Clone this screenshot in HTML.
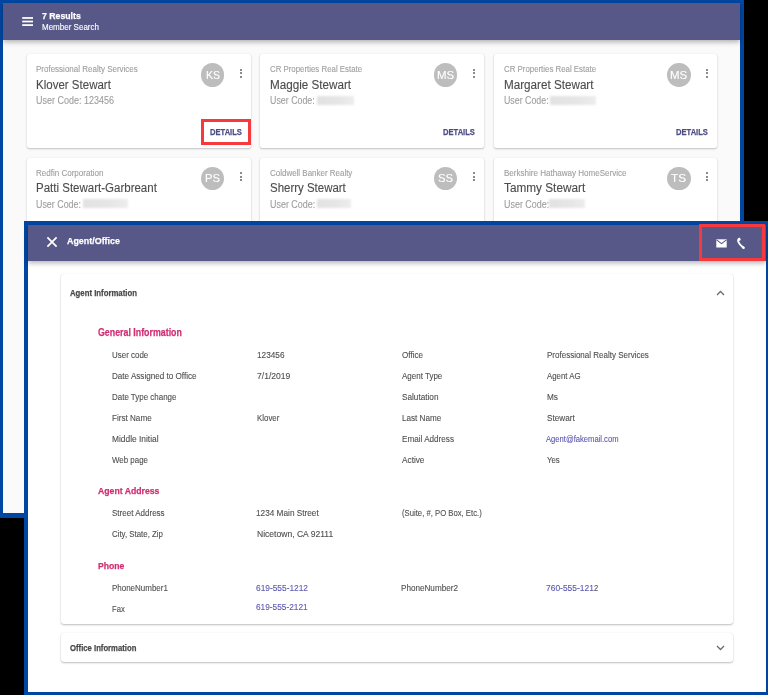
<!DOCTYPE html>
<html><head><meta charset="utf-8"><style>
html,body{margin:0;padding:0;background:#000;width:768px;height:695px;overflow:hidden}
body{position:relative;font-family:"Liberation Sans",sans-serif}
.b{position:absolute;box-sizing:border-box}
.t{position:absolute;white-space:nowrap;transform-origin:0 0}
</style></head><body>
<div class="b" style="left:0px;top:0px;width:744px;height:518px;background:#0047a3"></div>
<div class="b" style="left:3px;top:3px;width:736.5px;height:510.29999999999995px;background:#fafafa"></div>
<div class="b" style="left:3px;top:3px;width:736.5px;height:37.3px;background:#585888;box-shadow:0 2px 5px rgba(0,0,0,.3)"></div>
<svg class="b" style="left:20px;top:15px" width="16" height="14" viewBox="0 0 16 14"><rect x="2.2" y="2.1" width="10.8" height="1.75" fill="#fff"/><rect x="2.2" y="5.65" width="10.8" height="1.75" fill="#fff"/><rect x="2.2" y="9.2" width="10.8" height="1.75" fill="#fff"/></svg>
<div class="t" style="left:42.30px;top:10.74px;font-size:9.637px;line-height:9.637px;font-weight:700;color:#fff;transform:scaleX(0.9058);;-webkit-text-stroke:0.25px #fff">7 Results</div>
<div class="t" style="left:42.20px;top:23.49px;font-size:8.520px;line-height:8.520px;font-weight:400;color:#fff;transform:scaleX(0.9403);;-webkit-text-stroke:0.12px #fff">Member Search</div>
<div class="b" style="left:26.7px;top:54px;width:224.3px;height:94px;background:#fff;border-radius:2px;box-shadow:0 1px 2px rgba(0,0,0,.22),0 0 1px rgba(0,0,0,.12)"></div>
<div class="t" style="left:36.30px;top:65.22px;font-size:9.078px;line-height:9.078px;font-weight:400;color:#9e9e9e;transform:scaleX(0.8826);;-webkit-text-stroke:0.12px #9e9e9e">Professional Realty Services</div>
<div class="t" style="left:36.30px;top:79.60px;font-size:11.872px;line-height:11.872px;font-weight:400;color:#4c4c4c;transform:scaleX(0.9712);;-webkit-text-stroke:0.12px #4c4c4c">Klover Stewart</div>
<div class="t" style="left:36.30px;top:96.15px;font-size:10.335px;line-height:10.335px;font-weight:400;color:#9e9e9e;transform:scaleX(0.8700);;-webkit-text-stroke:0.12px #9e9e9e">User Code: 123456</div>
<div class="b" style="left:200.7px;top:63.1px;width:23.80000000000001px;height:23.800000000000004px;background:#bdbdbd;border-radius:50%"></div>
<div class="t" style="left:205.55px;top:69.92px;font-size:11.313px;line-height:11.313px;font-weight:400;color:#fff;transform:scaleX(0.9336);;-webkit-text-stroke:0.2px #fff;-webkit-text-stroke:0.12px #fff">KS</div>
<div class="b" style="left:239.95000000000002px;top:68.64999999999999px;width:1.8999999999999773px;height:1.9000000000000057px;background:#666;border-radius:50%"></div>
<div class="b" style="left:239.95000000000002px;top:72.14999999999999px;width:1.8999999999999773px;height:1.9000000000000057px;background:#666;border-radius:50%"></div>
<div class="b" style="left:239.95000000000002px;top:75.64999999999999px;width:1.8999999999999773px;height:1.9000000000000057px;background:#666;border-radius:50%"></div>
<div class="t" style="left:209.80px;top:128.02px;font-size:9.078px;line-height:9.078px;font-weight:700;color:#4d4d86;transform:scaleX(0.8383);;-webkit-text-stroke:0.25px #4d4d86">DETAILS</div>
<div class="b" style="left:260px;top:54px;width:224px;height:94px;background:#fff;border-radius:2px;box-shadow:0 1px 2px rgba(0,0,0,.22),0 0 1px rgba(0,0,0,.12)"></div>
<div class="t" style="left:269.60px;top:65.22px;font-size:9.078px;line-height:9.078px;font-weight:400;color:#9e9e9e;transform:scaleX(0.8662);;-webkit-text-stroke:0.12px #9e9e9e">CR Properties Real Estate</div>
<div class="t" style="left:269.60px;top:79.60px;font-size:11.872px;line-height:11.872px;font-weight:400;color:#4c4c4c;transform:scaleX(0.9842);;-webkit-text-stroke:0.12px #4c4c4c">Maggie Stewart</div>
<div class="t" style="left:269.60px;top:96.15px;font-size:10.335px;line-height:10.335px;font-weight:400;color:#9e9e9e;transform:scaleX(0.8567);;-webkit-text-stroke:0.12px #9e9e9e">User Code:</div>
<div class="b" style="left:317.3px;top:95.8px;width:37.0px;height:9.0px;background:linear-gradient(90deg,#e2e2e2,#e6e6e6 60%,#ededed);filter:blur(1px)"></div>
<div class="b" style="left:433.70000000000005px;top:63.1px;width:23.799999999999955px;height:23.800000000000004px;background:#bdbdbd;border-radius:50%"></div>
<div class="t" style="left:436.95px;top:69.92px;font-size:11.313px;line-height:11.313px;font-weight:400;color:#fff;transform:scaleX(1.0195);;-webkit-text-stroke:0.2px #fff;-webkit-text-stroke:0.12px #fff">MS</div>
<div class="b" style="left:472.95px;top:68.64999999999999px;width:1.8999999999999773px;height:1.9000000000000057px;background:#666;border-radius:50%"></div>
<div class="b" style="left:472.95px;top:72.14999999999999px;width:1.8999999999999773px;height:1.9000000000000057px;background:#666;border-radius:50%"></div>
<div class="b" style="left:472.95px;top:75.64999999999999px;width:1.8999999999999773px;height:1.9000000000000057px;background:#666;border-radius:50%"></div>
<div class="t" style="left:442.80px;top:128.02px;font-size:9.078px;line-height:9.078px;font-weight:700;color:#4d4d86;transform:scaleX(0.8383);;-webkit-text-stroke:0.25px #4d4d86">DETAILS</div>
<div class="b" style="left:494px;top:54px;width:223.29999999999995px;height:94px;background:#fff;border-radius:2px;box-shadow:0 1px 2px rgba(0,0,0,.22),0 0 1px rgba(0,0,0,.12)"></div>
<div class="t" style="left:503.60px;top:65.22px;font-size:9.078px;line-height:9.078px;font-weight:400;color:#9e9e9e;transform:scaleX(0.8671);;-webkit-text-stroke:0.12px #9e9e9e">CR Properties Real Estate</div>
<div class="t" style="left:503.60px;top:79.60px;font-size:11.872px;line-height:11.872px;font-weight:400;color:#4c4c4c;transform:scaleX(0.9840);;-webkit-text-stroke:0.12px #4c4c4c">Margaret Stewart</div>
<div class="t" style="left:503.60px;top:96.15px;font-size:10.335px;line-height:10.335px;font-weight:400;color:#9e9e9e;transform:scaleX(0.8547);;-webkit-text-stroke:0.12px #9e9e9e">User Code:</div>
<div class="b" style="left:550.2px;top:95.8px;width:45.799999999999955px;height:9.0px;background:linear-gradient(90deg,#e2e2e2,#e6e6e6 60%,#ededed);filter:blur(1px)"></div>
<div class="b" style="left:667.0px;top:63.1px;width:23.799999999999955px;height:23.800000000000004px;background:#bdbdbd;border-radius:50%"></div>
<div class="t" style="left:670.25px;top:69.92px;font-size:11.313px;line-height:11.313px;font-weight:400;color:#fff;transform:scaleX(1.0195);;-webkit-text-stroke:0.2px #fff;-webkit-text-stroke:0.12px #fff">MS</div>
<div class="b" style="left:706.2499999999999px;top:68.64999999999999px;width:1.900000000000091px;height:1.9000000000000057px;background:#666;border-radius:50%"></div>
<div class="b" style="left:706.2499999999999px;top:72.14999999999999px;width:1.900000000000091px;height:1.9000000000000057px;background:#666;border-radius:50%"></div>
<div class="b" style="left:706.2499999999999px;top:75.64999999999999px;width:1.900000000000091px;height:1.9000000000000057px;background:#666;border-radius:50%"></div>
<div class="t" style="left:676.10px;top:128.02px;font-size:9.078px;line-height:9.078px;font-weight:700;color:#4d4d86;transform:scaleX(0.8383);;-webkit-text-stroke:0.25px #4d4d86">DETAILS</div>
<div class="b" style="left:26.7px;top:157.5px;width:224.3px;height:102.5px;background:#fff;border-radius:2px;box-shadow:0 1px 2px rgba(0,0,0,.22),0 0 1px rgba(0,0,0,.12)"></div>
<div class="t" style="left:36.30px;top:168.72px;font-size:9.078px;line-height:9.078px;font-weight:400;color:#9e9e9e;transform:scaleX(0.8857);;-webkit-text-stroke:0.12px #9e9e9e">Redfin Corporation</div>
<div class="t" style="left:36.30px;top:183.10px;font-size:11.872px;line-height:11.872px;font-weight:400;color:#4c4c4c;transform:scaleX(0.9702);;-webkit-text-stroke:0.12px #4c4c4c">Patti Stewart-Garbreant</div>
<div class="t" style="left:36.30px;top:199.65px;font-size:10.335px;line-height:10.335px;font-weight:400;color:#9e9e9e;transform:scaleX(0.8605);;-webkit-text-stroke:0.12px #9e9e9e">User Code:</div>
<div class="b" style="left:82.5px;top:199.3px;width:45.900000000000006px;height:9.0px;background:linear-gradient(90deg,#e2e2e2,#e6e6e6 60%,#ededed);filter:blur(1px)"></div>
<div class="b" style="left:200.7px;top:166.6px;width:23.80000000000001px;height:23.80000000000001px;background:#bdbdbd;border-radius:50%"></div>
<div class="t" style="left:205.05px;top:173.42px;font-size:11.313px;line-height:11.313px;font-weight:400;color:#fff;transform:scaleX(0.9998);;-webkit-text-stroke:0.2px #fff;-webkit-text-stroke:0.12px #fff">PS</div>
<div class="b" style="left:239.95000000000002px;top:172.14999999999998px;width:1.8999999999999773px;height:1.900000000000034px;background:#666;border-radius:50%"></div>
<div class="b" style="left:239.95000000000002px;top:175.64999999999998px;width:1.8999999999999773px;height:1.900000000000034px;background:#666;border-radius:50%"></div>
<div class="b" style="left:239.95000000000002px;top:179.14999999999998px;width:1.8999999999999773px;height:1.900000000000034px;background:#666;border-radius:50%"></div>
<div class="b" style="left:260px;top:157.5px;width:224px;height:102.5px;background:#fff;border-radius:2px;box-shadow:0 1px 2px rgba(0,0,0,.22),0 0 1px rgba(0,0,0,.12)"></div>
<div class="t" style="left:269.60px;top:168.72px;font-size:9.078px;line-height:9.078px;font-weight:400;color:#9e9e9e;transform:scaleX(0.8789);;-webkit-text-stroke:0.12px #9e9e9e">Coldwell Banker Realty</div>
<div class="t" style="left:269.60px;top:183.10px;font-size:11.872px;line-height:11.872px;font-weight:400;color:#4c4c4c;transform:scaleX(0.9665);;-webkit-text-stroke:0.12px #4c4c4c">Sherry Stewart</div>
<div class="t" style="left:269.60px;top:199.65px;font-size:10.335px;line-height:10.335px;font-weight:400;color:#9e9e9e;transform:scaleX(0.8662);;-webkit-text-stroke:0.12px #9e9e9e">User Code:</div>
<div class="b" style="left:316.6px;top:199.3px;width:34.0px;height:9.0px;background:linear-gradient(90deg,#e2e2e2,#e6e6e6 60%,#ededed);filter:blur(1px)"></div>
<div class="b" style="left:433.70000000000005px;top:166.6px;width:23.799999999999955px;height:23.80000000000001px;background:#bdbdbd;border-radius:50%"></div>
<div class="t" style="left:438.05px;top:173.42px;font-size:11.313px;line-height:11.313px;font-weight:400;color:#fff;transform:scaleX(0.9998);;-webkit-text-stroke:0.2px #fff;-webkit-text-stroke:0.12px #fff">SS</div>
<div class="b" style="left:472.95px;top:172.14999999999998px;width:1.8999999999999773px;height:1.900000000000034px;background:#666;border-radius:50%"></div>
<div class="b" style="left:472.95px;top:175.64999999999998px;width:1.8999999999999773px;height:1.900000000000034px;background:#666;border-radius:50%"></div>
<div class="b" style="left:472.95px;top:179.14999999999998px;width:1.8999999999999773px;height:1.900000000000034px;background:#666;border-radius:50%"></div>
<div class="b" style="left:494px;top:157.5px;width:223.29999999999995px;height:102.5px;background:#fff;border-radius:2px;box-shadow:0 1px 2px rgba(0,0,0,.22),0 0 1px rgba(0,0,0,.12)"></div>
<div class="t" style="left:503.60px;top:168.72px;font-size:9.078px;line-height:9.078px;font-weight:400;color:#9e9e9e;transform:scaleX(0.8882);;-webkit-text-stroke:0.12px #9e9e9e">Berkshire Hathaway HomeService</div>
<div class="t" style="left:503.60px;top:183.10px;font-size:11.872px;line-height:11.872px;font-weight:400;color:#4c4c4c;transform:scaleX(0.9940);;-webkit-text-stroke:0.12px #4c4c4c">Tammy Stewart</div>
<div class="t" style="left:503.60px;top:199.65px;font-size:10.335px;line-height:10.335px;font-weight:400;color:#9e9e9e;transform:scaleX(0.8662);;-webkit-text-stroke:0.12px #9e9e9e">User Code:</div>
<div class="b" style="left:549.4px;top:199.3px;width:35.89999999999998px;height:9.0px;background:linear-gradient(90deg,#e2e2e2,#e6e6e6 60%,#ededed);filter:blur(1px)"></div>
<div class="b" style="left:667.0px;top:166.6px;width:23.799999999999955px;height:23.80000000000001px;background:#bdbdbd;border-radius:50%"></div>
<div class="t" style="left:671.35px;top:173.42px;font-size:11.313px;line-height:11.313px;font-weight:400;color:#fff;transform:scaleX(1.0428);;-webkit-text-stroke:0.2px #fff;-webkit-text-stroke:0.12px #fff">TS</div>
<div class="b" style="left:706.2499999999999px;top:172.14999999999998px;width:1.900000000000091px;height:1.900000000000034px;background:#666;border-radius:50%"></div>
<div class="b" style="left:706.2499999999999px;top:175.64999999999998px;width:1.900000000000091px;height:1.900000000000034px;background:#666;border-radius:50%"></div>
<div class="b" style="left:706.2499999999999px;top:179.14999999999998px;width:1.900000000000091px;height:1.900000000000034px;background:#666;border-radius:50%"></div>
<div class="b" style="left:201.2px;top:119.4px;width:49.5px;height:25.599999999999994px;border:3px solid #f5393c;box-sizing:border-box"></div>
<div class="b" style="left:24px;top:221px;width:744px;height:474px;background:#0047a3"></div>
<div class="b" style="left:28px;top:224.5px;width:737.6px;height:467.70000000000005px;background:#fff"></div>
<div class="b" style="left:28px;top:224.5px;width:737.6px;height:36.0px;background:#585888;box-shadow:0 2px 5px rgba(0,0,0,.3)"></div>
<svg class="b" style="left:46px;top:236px" width="12" height="12" viewBox="0 0 12 12"><path d="M1.4 1.4L10.6 10.6M10.6 1.4L1.4 10.6" stroke="#fff" stroke-width="1.75"/></svg>
<div class="t" style="left:66.60px;top:235.97px;font-size:9.777px;line-height:9.777px;font-weight:700;color:#fff;transform:scaleX(0.9119);;-webkit-text-stroke:0.25px #fff">Agent/Office</div>
<svg class="b" style="left:715.5px;top:238.5px" width="12" height="9" viewBox="0 0 12 9"><rect x="0.3" y="0.3" width="10.4" height="8.2" fill="#fff"/><path d="M0.6 0.9L5.5 4.6L10.4 0.9" stroke="#585888" stroke-width="1.1" fill="none"/></svg>
<svg class="b" style="left:736px;top:237px" width="10" height="13" viewBox="0 0 10 13"><path d="M3.2 1.8C1.2 2.8 1.6 6.4 7.6 10.9" stroke="#fff" stroke-width="1.9" stroke-linecap="round" fill="none"/><ellipse cx="3.3" cy="2.3" rx="1.3" ry="1.5" fill="#fff" transform="rotate(-30 3.3 2.3)"/><ellipse cx="7.3" cy="10.4" rx="1.6" ry="1.2" fill="#fff" transform="rotate(35 7.3 10.4)"/></svg>
<div class="b" style="left:699.3px;top:223.6px;width:65.30000000000007px;height:37.50000000000003px;border:3px solid #f5393c;box-sizing:border-box"></div>
<div class="b" style="left:60.7px;top:273.8px;width:672.6999999999999px;height:350.2px;background:#fff;border-radius:3px;box-shadow:0 1px 2px rgba(0,0,0,.25),0 0 1px rgba(0,0,0,.1)"></div>
<div class="t" style="left:70.10px;top:289.25px;font-size:8.799px;line-height:8.799px;font-weight:700;color:#4a4a4a;transform:scaleX(0.8844);;-webkit-text-stroke:0.25px #4a4a4a">Agent Information</div>
<svg class="b" style="left:716px;top:290px" width="9" height="6" viewBox="0 0 9 6"><path d="M1 5L4.5 1.5L8 5" stroke="#6a6a6a" stroke-width="1.25" fill="none"/></svg>
<div class="t" style="left:97.90px;top:327.03px;font-size:10.894px;line-height:10.894px;font-weight:700;color:#cf2f73;transform:scaleX(0.8117);;-webkit-text-stroke:0.25px #cf2f73">General Information</div>
<div class="t" style="left:112.10px;top:350.27px;font-size:9.777px;line-height:9.777px;font-weight:400;color:#4f4f4f;transform:scaleX(0.8142);;-webkit-text-stroke:0.12px #4f4f4f">User code</div>
<div class="t" style="left:257.30px;top:350.27px;font-size:9.777px;line-height:9.777px;font-weight:400;color:#4f4f4f;transform:scaleX(0.8434);;-webkit-text-stroke:0.12px #4f4f4f">123456</div>
<div class="t" style="left:401.50px;top:350.27px;font-size:9.777px;line-height:9.777px;font-weight:400;color:#4f4f4f;transform:scaleX(0.8277);;-webkit-text-stroke:0.12px #4f4f4f">Office</div>
<div class="t" style="left:546.50px;top:350.27px;font-size:9.777px;line-height:9.777px;font-weight:400;color:#4f4f4f;transform:scaleX(0.8196);;-webkit-text-stroke:0.12px #4f4f4f">Professional Realty Services</div>
<div class="t" style="left:112.10px;top:371.22px;font-size:9.777px;line-height:9.777px;font-weight:400;color:#4f4f4f;transform:scaleX(0.8297);;-webkit-text-stroke:0.12px #4f4f4f">Date Assigned to Office</div>
<div class="t" style="left:257.30px;top:371.22px;font-size:9.777px;line-height:9.777px;font-weight:400;color:#4f4f4f;transform:scaleX(0.8771);;-webkit-text-stroke:0.12px #4f4f4f">7/1/2019</div>
<div class="t" style="left:401.50px;top:371.22px;font-size:9.777px;line-height:9.777px;font-weight:400;color:#4f4f4f;transform:scaleX(0.8179);;-webkit-text-stroke:0.12px #4f4f4f">Agent Type</div>
<div class="t" style="left:546.50px;top:371.22px;font-size:9.777px;line-height:9.777px;font-weight:400;color:#4f4f4f;transform:scaleX(0.8054);;-webkit-text-stroke:0.12px #4f4f4f">Agent AG</div>
<div class="t" style="left:112.10px;top:392.17px;font-size:9.777px;line-height:9.777px;font-weight:400;color:#4f4f4f;transform:scaleX(0.8145);;-webkit-text-stroke:0.12px #4f4f4f">Date Type change</div>
<div class="t" style="left:401.50px;top:392.17px;font-size:9.777px;line-height:9.777px;font-weight:400;color:#4f4f4f;transform:scaleX(0.8390);;-webkit-text-stroke:0.12px #4f4f4f">Salutation</div>
<div class="t" style="left:546.50px;top:392.17px;font-size:9.777px;line-height:9.777px;font-weight:400;color:#4f4f4f;transform:scaleX(0.8428);;-webkit-text-stroke:0.12px #4f4f4f">Ms</div>
<div class="t" style="left:112.10px;top:413.12px;font-size:9.777px;line-height:9.777px;font-weight:400;color:#4f4f4f;transform:scaleX(0.8304);;-webkit-text-stroke:0.12px #4f4f4f">First Name</div>
<div class="t" style="left:257.30px;top:413.12px;font-size:9.777px;line-height:9.777px;font-weight:400;color:#4f4f4f;transform:scaleX(0.8082);;-webkit-text-stroke:0.12px #4f4f4f">Klover</div>
<div class="t" style="left:401.50px;top:413.12px;font-size:9.777px;line-height:9.777px;font-weight:400;color:#4f4f4f;transform:scaleX(0.8314);;-webkit-text-stroke:0.12px #4f4f4f">Last Name</div>
<div class="t" style="left:546.50px;top:413.12px;font-size:9.777px;line-height:9.777px;font-weight:400;color:#4f4f4f;transform:scaleX(0.8358);;-webkit-text-stroke:0.12px #4f4f4f">Stewart</div>
<div class="t" style="left:112.10px;top:434.07px;font-size:9.777px;line-height:9.777px;font-weight:400;color:#4f4f4f;transform:scaleX(0.8573);;-webkit-text-stroke:0.12px #4f4f4f">Middle Initial</div>
<div class="t" style="left:401.50px;top:434.07px;font-size:9.777px;line-height:9.777px;font-weight:400;color:#4f4f4f;transform:scaleX(0.8324);;-webkit-text-stroke:0.12px #4f4f4f">Email Address</div>
<div class="t" style="left:545.60px;top:434.07px;font-size:9.777px;line-height:9.777px;font-weight:400;color:#5d58b0;transform:scaleX(0.7800);;-webkit-text-stroke:0.12px #5d58b0">Agent@fakemail.com</div>
<div class="t" style="left:112.10px;top:455.02px;font-size:9.777px;line-height:9.777px;font-weight:400;color:#4f4f4f;transform:scaleX(0.8111);;-webkit-text-stroke:0.12px #4f4f4f">Web page</div>
<div class="t" style="left:401.50px;top:455.02px;font-size:9.777px;line-height:9.777px;font-weight:400;color:#4f4f4f;transform:scaleX(0.8446);;-webkit-text-stroke:0.12px #4f4f4f">Active</div>
<div class="t" style="left:546.50px;top:455.02px;font-size:9.777px;line-height:9.777px;font-weight:400;color:#4f4f4f;transform:scaleX(0.8032);;-webkit-text-stroke:0.12px #4f4f4f">Yes</div>
<div class="t" style="left:98.30px;top:486.41px;font-size:9.497px;line-height:9.497px;font-weight:700;color:#cf2f73;transform:scaleX(0.9153);;-webkit-text-stroke:0.25px #cf2f73">Agent Address</div>
<div class="t" style="left:112.30px;top:507.99px;font-size:9.637px;line-height:9.637px;font-weight:400;color:#4f4f4f;transform:scaleX(0.8336);;-webkit-text-stroke:0.12px #4f4f4f">Street Address</div>
<div class="t" style="left:256.25px;top:508.09px;font-size:9.637px;line-height:9.637px;font-weight:400;color:#4f4f4f;transform:scaleX(0.8558);;-webkit-text-stroke:0.12px #4f4f4f">1234 Main Street</div>
<div class="t" style="left:401.50px;top:508.09px;font-size:9.637px;line-height:9.637px;font-weight:400;color:#4f4f4f;transform:scaleX(0.8012);;-webkit-text-stroke:0.12px #4f4f4f">(Suite, #, PO Box, Etc.)</div>
<div class="t" style="left:112.30px;top:528.99px;font-size:9.637px;line-height:9.637px;font-weight:400;color:#4f4f4f;transform:scaleX(0.8161);;-webkit-text-stroke:0.12px #4f4f4f">City, State, Zip</div>
<div class="t" style="left:256.60px;top:528.99px;font-size:9.637px;line-height:9.637px;font-weight:400;color:#4f4f4f;transform:scaleX(0.8881);;-webkit-text-stroke:0.12px #4f4f4f">Nicetown, CA 92111</div>
<div class="t" style="left:98.30px;top:560.91px;font-size:9.497px;line-height:9.497px;font-weight:700;color:#cf2f73;transform:scaleX(0.9099);;-webkit-text-stroke:0.25px #cf2f73">Phone</div>
<div class="t" style="left:112.30px;top:583.39px;font-size:9.637px;line-height:9.637px;font-weight:400;color:#4f4f4f;transform:scaleX(0.8281);;-webkit-text-stroke:0.12px #4f4f4f">PhoneNumber1</div>
<div class="t" style="left:256.20px;top:583.19px;font-size:9.637px;line-height:9.637px;font-weight:400;color:#5d58b0;transform:scaleX(0.8678);;-webkit-text-stroke:0.12px #5d58b0">619-555-1212</div>
<div class="t" style="left:401.40px;top:582.99px;font-size:9.637px;line-height:9.637px;font-weight:400;color:#4f4f4f;transform:scaleX(0.8444);;-webkit-text-stroke:0.12px #4f4f4f">PhoneNumber2</div>
<div class="t" style="left:545.80px;top:582.69px;font-size:9.637px;line-height:9.637px;font-weight:400;color:#5d58b0;transform:scaleX(0.8766);;-webkit-text-stroke:0.12px #5d58b0">760-555-121</div>
<div class="t" style="left:594.20px;top:582.69px;font-size:9.637px;line-height:9.637px;font-weight:400;color:#555;transform:scaleX(0.7853);;-webkit-text-stroke:0.12px #555">2</div>
<div class="t" style="left:112.30px;top:604.09px;font-size:9.637px;line-height:9.637px;font-weight:400;color:#4f4f4f;transform:scaleX(0.7915);;-webkit-text-stroke:0.12px #4f4f4f">Fax</div>
<div class="t" style="left:256.20px;top:601.89px;font-size:9.637px;line-height:9.637px;font-weight:400;color:#5d58b0;transform:scaleX(0.8611);;-webkit-text-stroke:0.12px #5d58b0">619-555-2121</div>
<div class="b" style="left:60.7px;top:633.4px;width:672.6999999999999px;height:28.200000000000045px;background:#fff;border-radius:3px;box-shadow:0 1px 2px rgba(0,0,0,.25),0 0 1px rgba(0,0,0,.1)"></div>
<div class="t" style="left:70.20px;top:644.00px;font-size:8.799px;line-height:8.799px;font-weight:700;color:#4a4a4a;transform:scaleX(0.8778);;-webkit-text-stroke:0.25px #4a4a4a">Office Information</div>
<svg class="b" style="left:716px;top:645px" width="9" height="6" viewBox="0 0 9 6"><path d="M1 1L4.5 4.5L8 1" stroke="#6a6a6a" stroke-width="1.25" fill="none"/></svg>
</body></html>
